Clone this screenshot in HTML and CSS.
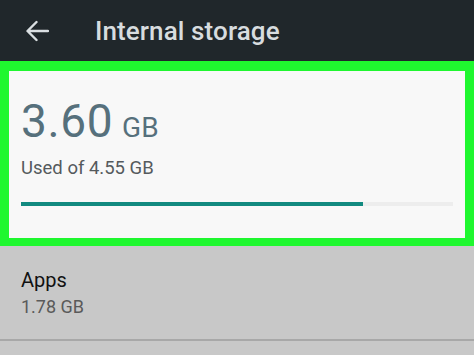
FILE: index.html
```html
<!DOCTYPE html>
<html>
<head>
<meta charset="utf-8">
<link rel="stylesheet" href="styles.css">
</head>
<body>
<div class="screen">
  <header class="appbar">
    <svg class="back" width="24" height="22" viewBox="0 0 24 22">
      <path d="M23 11H3M11.5 2L2.5 11l9 9" fill="none" stroke="#dadfe2" stroke-width="2.4" stroke-linecap="round" stroke-linejoin="round"/>
    </svg>
    <span class="title">Internal storage</span>
  </header>
  <section class="highlight">
    <div class="card">
      <div class="amount"><span class="num">3.60</span><span class="unit">GB</span></div>
      <div class="used">Used of 4.55 GB</div>
      <div class="track"><div class="fill" style="width:79.1%"></div></div>
    </div>
  </section>
  <section class="item">
    <div class="item-title">Apps</div>
    <div class="item-sub">1.78 GB</div>
  </section>
  <div class="divider"></div>
  <div class="rest"></div>
</div>
</body>
</html>
```
FILE: styles.css
```css
html, body { margin: 0; padding: 0; }
body { font-family: Roboto, "Noto Sans", sans-serif; background: #c8c8c8; }
.screen { width: 474px; height: 355px; overflow: hidden; display: flex; flex-direction: column; }
.appbar {
  height: 61px; background: #20272b; display: flex; align-items: center;
  padding-left: 25px; box-sizing: border-box; flex-shrink: 0;
}
.back { display: block; margin-top: 1px; }
.title {
  color: #d7dcdf; font-weight: 500; font-size: 26px; margin-left: 46px; margin-top: 1px;
  letter-spacing: 0.1px;
}
.highlight {
  background: #1ff72f; padding: 10px 9px 8px 9px; flex-shrink: 0;
}
.card {
  background: #f8f8f8; height: 167px; box-sizing: border-box; padding: 27px 12px 0 12px;
}
.amount { color: #56707c; line-height: 1; display: flex; align-items: baseline; }
.num { font-size: 46px; letter-spacing: 0.6px; }
.unit { font-size: 28px; margin-left: 9px; }
.used { color: #555a5d; font-size: 18.5px; margin-top: 13px; }
.track { margin-top: 23px; height: 4px; background: #ededed; width: 432px; }
.fill { height: 100%; background: #128a80; }
.item { padding: 23px 21px 0 21px; height: 93px; box-sizing: border-box; flex-shrink: 0; }
.item-title { color: #111; font-size: 20px; line-height: 22px; }
.item-sub { color: #5a5a5a; font-size: 18px; line-height: 22px; margin-top: 5px; }
.divider { height: 2px; background: #a8a8a8; flex-shrink: 0; }
.rest { flex: 1; background: #c8c8c8; }
```
